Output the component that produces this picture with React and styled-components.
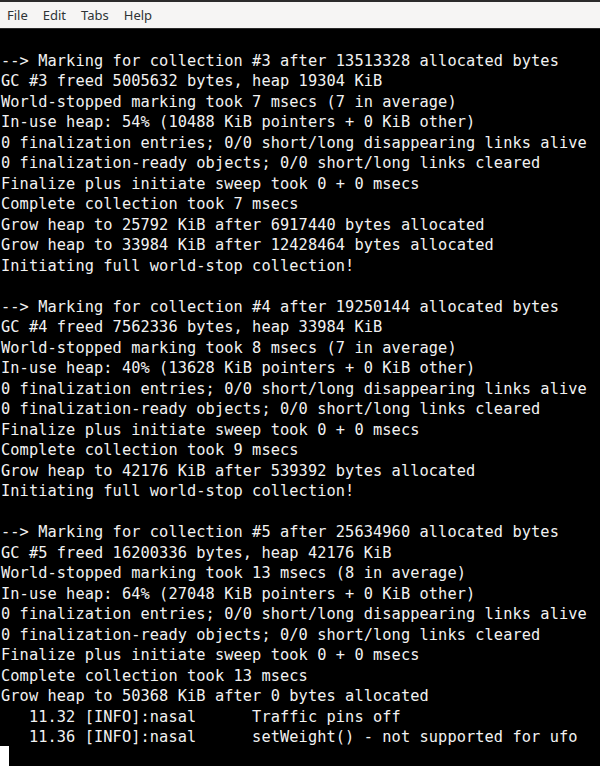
import styled, { createGlobalStyle } from "styled-components";

const GlobalStyle = createGlobalStyle`
  html, body {
    margin: 0;
    padding: 0;
    background: #000;
    overflow: hidden;
  }
`;

const lines = [
  "",
  "--> Marking for collection #3 after 13513328 allocated bytes",
  "GC #3 freed 5005632 bytes, heap 19304 KiB",
  "World-stopped marking took 7 msecs (7 in average)",
  "In-use heap: 54% (10488 KiB pointers + 0 KiB other)",
  "0 finalization entries; 0/0 short/long disappearing links alive",
  "0 finalization-ready objects; 0/0 short/long links cleared",
  "Finalize plus initiate sweep took 0 + 0 msecs",
  "Complete collection took 7 msecs",
  "Grow heap to 25792 KiB after 6917440 bytes allocated",
  "Grow heap to 33984 KiB after 12428464 bytes allocated",
  "Initiating full world-stop collection!",
  "",
  "--> Marking for collection #4 after 19250144 allocated bytes",
  "GC #4 freed 7562336 bytes, heap 33984 KiB",
  "World-stopped marking took 8 msecs (7 in average)",
  "In-use heap: 40% (13628 KiB pointers + 0 KiB other)",
  "0 finalization entries; 0/0 short/long disappearing links alive",
  "0 finalization-ready objects; 0/0 short/long links cleared",
  "Finalize plus initiate sweep took 0 + 0 msecs",
  "Complete collection took 9 msecs",
  "Grow heap to 42176 KiB after 539392 bytes allocated",
  "Initiating full world-stop collection!",
  "",
  "--> Marking for collection #5 after 25634960 allocated bytes",
  "GC #5 freed 16200336 bytes, heap 42176 KiB",
  "World-stopped marking took 13 msecs (8 in average)",
  "In-use heap: 64% (27048 KiB pointers + 0 KiB other)",
  "0 finalization entries; 0/0 short/long disappearing links alive",
  "0 finalization-ready objects; 0/0 short/long links cleared",
  "Finalize plus initiate sweep took 0 + 0 msecs",
  "Complete collection took 13 msecs",
  "Grow heap to 50368 KiB after 0 bytes allocated",
  "   11.32 [INFO]:nasal      Traffic pins off",
  "   11.36 [INFO]:nasal      setWeight() - not supported for ufo",
];

const Window = styled.div`
  width: 600px;
  height: 766px;
  display: flex;
  flex-direction: column;
  background: #000;
  border-top: 2px solid #2b2b2b;
  box-sizing: border-box;
`;

const MenuBar = styled.div`
  height: 25px;
  flex-shrink: 0;
  display: flex;
  align-items: center;
  gap: 15px;
  padding: 1px 7px 0;
  background: #f6f5f4;
  border-bottom: 1px solid #2b2b2b;
  font-family: "Noto Sans", "DejaVu Sans", sans-serif;
  font-size: 13px;
  color: #2e3436;
`;

const MenuItem = styled.span`
  line-height: 1;
`;

const Terminal = styled.pre`
  flex: 1;
  margin: 0;
  padding: 1px 0 0 1px;
  font-family: "DejaVu Sans Mono", monospace;
  font-size: 15.3px;
  letter-spacing: 0.09px;
  line-height: 20.5px;
  color: #f2f2f2;
  white-space: pre;
  overflow: hidden;
`;

const Line = styled.div`
  height: 20.5px;
`;

const Cursor = styled.span`
  display: inline-block;
  width: 9px;
  height: 21px;
  margin-left: -1px;
  margin-top: -2px;
  background: #ffffff;
  vertical-align: top;
`;

const App = () => {
  return (
    <>
      <GlobalStyle />
      <Window>
        <MenuBar>
          <MenuItem>File</MenuItem>
          <MenuItem>Edit</MenuItem>
          <MenuItem>Tabs</MenuItem>
          <MenuItem>Help</MenuItem>
        </MenuBar>
        <Terminal>
          {lines.map((text, i) => (
            <Line key={i}>{text}</Line>
          ))}
          <Line>
            <Cursor />
          </Line>
        </Terminal>
      </Window>
    </>
  );
};

export default App;
